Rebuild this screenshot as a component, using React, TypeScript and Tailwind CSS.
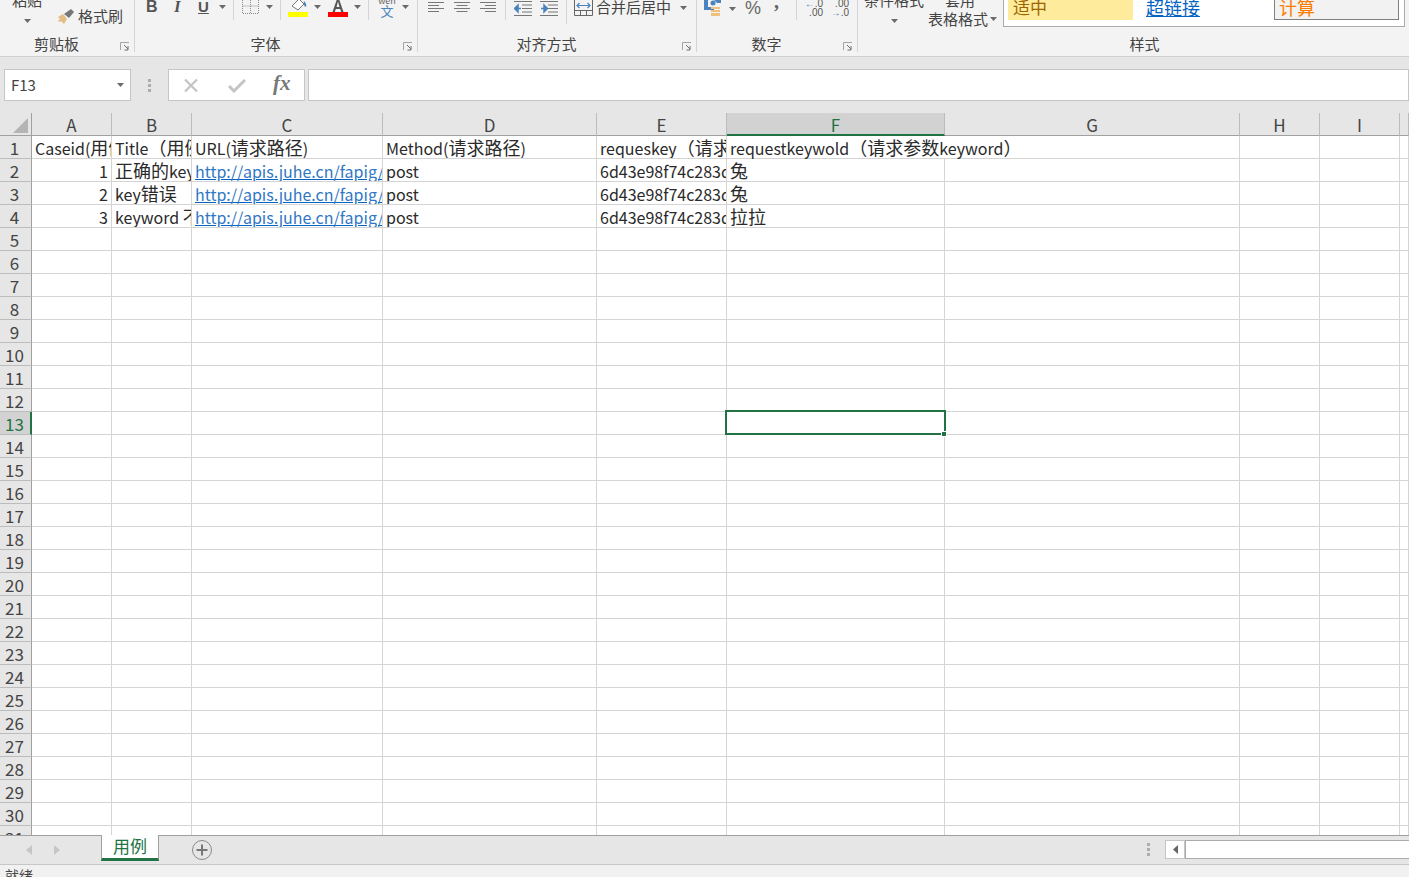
import type { ReactNode } from "react";

const COLS = ["A", "B", "C", "D", "E", "F", "G", "H", "I", ""];
const ROW_COUNT = 31;
const URL = "http://apis.juhe.cn/fapig/douyin/billboard";
const KEY = "6d43e98f74c283d4e6d1e2f4a7b";

const DATA: Record<number, string[]> = {
  1: ["Caseid(用例编号)", "Title（用例标题）", "URL(请求路径)", "Method(请求路径)", "requeskey（请求参数key）", "requestkeywold（请求参数keyword）"],
  2: ["1", "正确的key和keyword", URL, "post", KEY, "兔"],
  3: ["2", "key错误", URL, "post", KEY, "兔"],
  4: ["3", "keyword 不存在", URL, "post", KEY, "拉拉"],
};

// the sheet font draws Chinese a little larger than latin
function mixed(text: string) {
  return text.split(/([\u3000-\u9fff\uff00-\uffef]+)/).map((part, i) =>
    i % 2 === 1 ? (
      <span key={i} className="text-[18px] leading-none">
        {part}
      </span>
    ) : (
      part
    ),
  );
}

function Caret({ className = "" }: { className?: string }) {
  return (
    <svg width="7" height="4" viewBox="0 0 7 4" className={"shrink-0 " + className}>
      <path d="M0 0h7L3.5 4z" fill="#6a6a6a" />
    </svg>
  );
}

function Launcher() {
  return (
    <svg width="10" height="9" viewBox="0 0 10 9" className="absolute right-[5px] bottom-[1px]">
      <path d="M.5 8V.5H9" fill="none" stroke="#a5a5a5" />
      <path d="M4 3l4 4M8 4v4H4.500" fill="none" stroke="#6f6f6f" />
    </svg>
  );
}

function Sep() {
  return <div className="h-[20px] w-px shrink-0 bg-[#d4d4d4]" />;
}

function Group({ width, label, children }: { width: number; label: string; children: ReactNode }) {
  return (
    <div className="relative flex h-[52px] shrink-0 flex-col" style={{ width }}>
      <div className="absolute top-0 right-0 h-[52px] w-px bg-[#d4d4d4]" />
      <div className="h-[36px] overflow-hidden">{children}</div>
      <div className="pr-[22px] text-center text-[15px] leading-[16px] text-[#444]">{label}</div>
      <Launcher />
    </div>
  );
}

function AlignIcon({ mode }: { mode: "l" | "c" | "r" }) {
  const long = [1.5, 7.5];
  const short = [4.5, 10.5];
  const x = mode === "l" ? 0 : mode === "c" ? 2.5 : 5;
  return (
    <svg width="16" height="12" viewBox="0 0 16 12" className="shrink-0">
      {long.map((y) => <path key={y} d={`M0 ${y}h16`} stroke="#777" />)}
      {short.map((y) => <path key={y} d={`M${x} ${y}h11`} stroke="#777" />)}
    </svg>
  );
}

function IndentIcon({ flip }: { flip?: boolean }) {
  return (
    <svg width="18" height="15" viewBox="0 0 18 15" className="shrink-0">
      <path d="M0 .5h18M8 4h10M8 7.500h10M8 11h10M0 14.500h18" stroke="#777" />
      {flip ? (
        <path d="M1 7.500h4M4 4l3.500 3.500L4 11z" stroke="#4a83bd" strokeWidth="1.5" fill="#4a83bd" />
      ) : (
        <path d="M7 7.500H3M4 4L.5 7.500 4 11z" stroke="#4a83bd" strokeWidth="1.5" fill="#4a83bd" />
      )}
    </svg>
  );
}

function ClipboardGroup() {
  return (
    <Group width={135} label="剪贴板">
      <div className="flex">
        <div className="ml-[12px] flex w-[30px] flex-col items-center">
          <span className="-mt-[9px] text-[15px] leading-[18px] text-[#444]">粘贴</span>
          <Caret className="mt-[10px]" />
        </div>
        <div className="mt-[6px] ml-[15px] flex items-center gap-[4px]">
          <svg width="17" height="15" viewBox="0 0 17 15">
            <path d="M1 8l5-3 4 5-3 5-3-3-1 1-2-1 2-2z" fill="#e4bd84" />
            <path d="M7 5l7-5 3 3-5 6z" fill="#777" />
          </svg>
          <span className="text-[15px] leading-[20px] text-[#444]">格式刷</span>
        </div>
      </div>
    </Group>
  );
}

function FontGroup() {
  return (
    <Group width={283} label="字体">
      <div className="-mt-[2px] flex h-[22px] items-start">
        <span className="ml-[11px] w-[10px] font-['Liberation_Sans',sans-serif] text-[16px] leading-[18px] font-bold text-[#555]">B</span>
        <span className="ml-[18px] w-[8px] font-['Liberation_Serif',serif] text-[17px] leading-[18px] font-bold text-[#555] italic">I</span>
        <span className="ml-[16px] w-[11px] font-['Liberation_Sans',sans-serif] text-[15px] leading-[18px] font-bold text-[#555] underline">U</span>
        <Caret className="mt-[7px] ml-[10px]" />
        <div className="mt-[2px] ml-[7px]"><Sep /></div>
        <svg width="17" height="16" viewBox="0 0 17 16" className="ml-[8px]">
          <path d="M.5 0v15.500h16V0M8.500 0v15M.5 8h16" fill="none" stroke="#8a8a8a" strokeDasharray="1 1" />
        </svg>
        <Caret className="mt-[7px] ml-[7px]" />
        <div className="mt-[2px] ml-[7px]"><Sep /></div>
        <svg width="20" height="20" viewBox="0 0 20 20" className="ml-[7px] shrink-0">
          <path d="M4 8l7-7 5 5-6 6z" fill="#fff" stroke="#777" />
          <path d="M16 3q3 3 2 6-3-1-2-6z" fill="#4a83bd" />
          <rect y="14" width="20" height="5" fill="#ffff00" />
        </svg>
        <Caret className="mt-[7px] ml-[6px]" />
        <svg width="20" height="20" viewBox="0 0 20 20" className="ml-[7px] shrink-0">
          <path d="M4.500 14L9 1h2l4.500 13h-2.300l-1-3H7.800l-1 3zM8.500 9h3L10 3.500z" fill="#555" />
          <rect y="14" width="20" height="5" fill="#ff0000" />
        </svg>
        <Caret className="mt-[7px] ml-[6px]" />
        <div className="mt-[2px] ml-[7px]"><Sep /></div>
        <div className="ml-[9px] flex w-[18px] flex-col items-center">
          <span className="-mt-[1px] text-[9px] leading-[7px] text-[#666]">wén</span>
          <span className="text-[13px] leading-[13px] text-[#4a83bd]">文</span>
        </div>
        <Caret className="mt-[7px] ml-[6px]" />
      </div>
    </Group>
  );
}

function AlignGroup() {
  return (
    <Group width={279} label="对齐方式">
      <div className="flex h-[24px] items-start">
        <div className="mt-[1px] ml-[10px] flex gap-[10px]">
          <AlignIcon mode="l" />
          <AlignIcon mode="c" />
          <AlignIcon mode="r" />
        </div>
        <div className="ml-[9px]"><Sep /></div>
        <div className="mt-[1px] ml-[8px] flex gap-[8px]">
          <IndentIcon />
          <IndentIcon flip />
        </div>
        <div className="ml-[8px]"><div className="h-[24px] w-px bg-[#d4d4d4]" /></div>
        <svg width="19" height="16" viewBox="0 0 19 16" className="ml-[7px]">
          <path d="M.5 0v15.500h18V0M.5 10.500h18M6.500 10.500v5M12.500 10.500v5" fill="none" stroke="#666" />
          <path d="M3 5.500h13M5.500 3L3 5.500 5.500 8M13.500 3L16 5.500 13.500 8" fill="none" stroke="#4a83bd" strokeWidth="1.200" />
        </svg>
        <span className="-mt-[3px] ml-[3px] text-[15px] leading-[20px] whitespace-nowrap text-[#444]">合并后居中</span>
        <Caret className="mt-[6px] ml-[9px]" />
      </div>
    </Group>
  );
}

function NumberGroup() {
  return (
    <Group width={161} label="数字">
      <div className="flex h-[24px] items-start">
        <svg width="19" height="17" viewBox="0 0 19 17" className="ml-[7px] shrink-0">
          <path d="M0 0h4v7h6v3H0z" fill="#4a83bd" />
          <path d="M10 0h7v3h-4z" fill="#4a83bd" />
          <circle cx="9" cy="3" r="2.500" fill="#4a83bd" />
          <path d="M7 7h9v2H7zM7 10h9v2H7zM7 13h9v3H7z" fill="#eec27e" />
        </svg>
        <Caret className="mt-[7px] ml-[6px]" />
        <span className="-mt-[1px] ml-[9px] font-['Liberation_Sans',sans-serif] text-[18px] leading-[18px] text-[#666]">%</span>
        <span className="-mt-[8px] ml-[13px] font-['Liberation_Serif',serif] text-[20px] leading-[18px] font-bold text-[#666]">,</span>
        <div className="ml-[17px]"><Sep /></div>
        <div className="ml-[9px] flex w-[17px] flex-col items-end font-['Liberation_Sans',sans-serif] text-[10px] leading-[9px] text-[#555]">
          <span className="-mt-[1px]"><b className="text-[#4a83bd]">←</b>.0</span>
          <span>.00</span>
        </div>
        <div className="ml-[9px] flex w-[17px] flex-col items-end font-['Liberation_Sans',sans-serif] text-[10px] leading-[9px] text-[#555]">
          <span className="-mt-[1px]">.00</span>
          <span><b className="text-[#4a83bd]">→</b>.0</span>
        </div>
      </div>
    </Group>
  );
}

function StylesGroup() {
  return (
    <div className="flex h-[52px] flex-1 flex-col">
      <div className="flex h-[36px] overflow-hidden text-[#444]">
        <div className="ml-[6px] flex w-[60px] flex-col items-center">
          <span className="-mt-[9px] text-[15px] leading-[18px] whitespace-nowrap">条件格式</span>
          <Caret className="mt-[10px]" />
        </div>
        <div className="ml-[4px] flex w-[71px] flex-col">
          <span className="-mt-[9px] pl-[17px] text-[15px] leading-[18px]">套用</span>
          <div className="flex items-center whitespace-nowrap">
            <span className="text-[15px] leading-[20px]">表格格式</span>
            <Caret className="ml-[2px]" />
          </div>
        </div>
        <div className="ml-[4px] box-border flex h-[27px] w-[402px] shrink-0 border-r border-b border-l border-[#ababab] bg-white pl-[4px]">
          <div className="h-[20px] w-[125px] bg-[#ffeb9c] pl-[5px] text-[17px] leading-[14px] text-[#9c6500]">适中</div>
          <div className="ml-[13px] w-[128px] text-[18px] leading-[15px] text-[#0563c1] underline">超链接</div>
          <div className="box-border h-[20px] w-[125px] border-r border-b border-l border-[#7f7f7f] bg-[#f2f2f2] pl-[4px] text-[18px] leading-[15px] text-[#fa7d00]">计算</div>
        </div>
      </div>
      <div className="pl-[22px] text-center text-[15px] leading-[16px] text-[#444]">样式</div>
    </div>
  );
}

function Ribbon() {
  return (
    <div className="flex h-[57px] shrink-0 border-b border-[#d0d0d0] bg-[#f3f3f3]">
      <ClipboardGroup />
      <FontGroup />
      <AlignGroup />
      <NumberGroup />
      <StylesGroup />
    </div>
  );
}

function FormulaBar() {
  return (
    <div className="flex h-[56px] shrink-0 bg-[#e6e6e6] pt-[12px] pl-[4px]">
      <div className="flex h-[32px] w-[127px] items-center justify-between border border-[#c6c6c6] bg-white pr-[6px] pl-[6px] text-[15px] text-[#444]">
        F13
        <Caret />
      </div>
      <div className="mx-[16px] flex h-[32px] w-[5px] flex-col items-center justify-center gap-[2px]">
        <i className="size-[3px] bg-[#adadad]" />
        <i className="size-[3px] bg-[#adadad]" />
        <i className="size-[3px] bg-[#adadad]" />
      </div>
      <div className="flex h-[32px] w-[137px] items-center border border-[#c6c6c6] bg-white pl-[14px]">
        <svg width="16" height="15" viewBox="0 0 16 15">
          <path d="M2 1.500l12 12M14 1.500l-12 12" stroke="#c4c4c4" strokeWidth="2.200" />
        </svg>
        <svg width="18" height="15" viewBox="0 0 18 15" className="ml-[29px]">
          <path d="M1 8l5 5L17 2" fill="none" stroke="#c4c4c4" strokeWidth="3" />
        </svg>
        <span className="mt-[-2px] ml-[27px] font-['Liberation_Serif',serif] text-[21px] font-bold text-[#777] italic">fx</span>
      </div>
      <div className="ml-[3px] h-[32px] flex-1 border border-[#c6c6c6] bg-white" />
    </div>
  );
}

function Cell({ row, col, text }: { row: number; col: number; text?: string }) {
  const spills = row === 1 && col === 5;
  const isNum = col === 0 && row > 1;
  const isLink = col === 2 && row > 1;
  const isActive = row === 13 && col === 5;
  return (
    <div
      className={
        "relative h-[23px] border-b border-[#d4d4d4] whitespace-nowrap " +
        (spills ? "z-10 " : "border-r ") +
        (spills || isActive ? "overflow-visible " : "overflow-hidden ")
      }
    >
      {text && (
        <div
          className={
            "px-[3px] text-[16px] leading-[25px] " +
            (isNum ? "text-right " : "text-left ") +
            (isLink ? "text-[#2f77c5] underline decoration-[#0563c1] " : "text-[#2a2a2a] ")
          }
        >
          {mixed(text)}
        </div>
      )}
      {isActive && (
        <div className="absolute -top-[2px] -left-[2px] z-20 h-[25px] w-[221px] border-2 border-[#217346]">
          <div className="absolute -right-[3px] -bottom-[4px] size-[6px] border border-white bg-[#217346]" />
        </div>
      )}
    </div>
  );
}

function Sheet() {
  const rows = Array.from({ length: ROW_COUNT }, (_, i) => i + 1);
  return (
    <div className="min-h-0 flex-1 overflow-hidden bg-white">
      <div className="grid grid-cols-[32px_80px_80px_191px_214px_130px_218px_295px_80px_80px_1fr] text-[#444]">
        <div className="flex h-[23px] items-end justify-end border-r border-b border-[#a0a0a0] bg-[#e6e6e6] pr-[3px] pb-[2px]">
          <svg width="15" height="15" viewBox="0 0 15 15">
            <path d="M15 0v15H0z" fill="#b4b4b4" />
          </svg>
        </div>
        {COLS.map((c, i) => (
          <div
            key={i}
            className={
              "h-[23px] border-r border-b border-r-[#bcbcbc] text-center text-[17px] leading-[23px] " +
              (c === "F"
                ? "border-b-2 border-b-[#217346] bg-[#d2d2d2] text-[#217346]"
                : "border-b-[#a0a0a0] bg-[#e6e6e6]")
            }
          >
            {c}
          </div>
        ))}
        {rows.map((r) => (
          <div key={r} className="contents">
            <div
              className={
                "h-[23px] border-b text-center text-[17px] leading-[23px] " +
                (r === 13
                  ? "border-r-2 border-b-[#bcbcbc] border-r-[#217346] bg-[#d2d2d2] pr-[1px] text-[#217346]"
                  : "border-r border-b-[#bcbcbc] border-r-[#a0a0a0] bg-[#e6e6e6] pr-[2px]")
              }
            >
              {r}
            </div>
            {COLS.map((_, c) => (
              <Cell key={c} row={r} col={c} text={DATA[r]?.[c]} />
            ))}
          </div>
        ))}
      </div>
    </div>
  );
}

function TabBar() {
  return (
    <div className="flex h-[30px] shrink-0 border-t border-b border-t-[#a0a0a0] border-b-[#c6c6c6] bg-[#e6e6e6]">
      <div className="flex w-[101px] items-center pl-[26px]">
        <svg width="6" height="10" viewBox="0 0 6 10"><path d="M6 0v10L0 5z" fill="#c6c6c6" /></svg>
        <svg width="6" height="10" viewBox="0 0 6 10" className="ml-[22px]"><path d="M0 0v10l6-5z" fill="#c6c6c6" /></svg>
      </div>
      <div className="-mt-px box-border h-[26px] w-[58px] border-x border-b-[3px] border-x-[#a0a0a0] border-b-[#217346] bg-white text-center text-[17px] leading-[21px] text-[#217346]">
        用例
      </div>
      <svg width="22" height="22" viewBox="0 0 22 22" className="mt-[3px] ml-[32px]">
        <circle cx="11" cy="11" r="9.500" fill="none" stroke="#8a8a8a" />
        <path d="M5.500 11h11M11 5.500v11" stroke="#777" strokeWidth="2" />
      </svg>
      <div className="ml-auto flex w-[263px] items-center pb-[1px]">
        <div className="flex w-[5px] flex-col items-center gap-[2px]">
          <i className="size-[3px] bg-[#adadad]" />
          <i className="size-[3px] bg-[#adadad]" />
          <i className="size-[3px] bg-[#adadad]" />
        </div>
        <div className="ml-[14px] flex h-[19px] w-[20px] items-center justify-center border border-[#c6c6c6] bg-white">
          <svg width="5" height="9" viewBox="0 0 5 9"><path d="M5 0v9L0 4.500z" fill="#666" /></svg>
        </div>
        <div className="h-[19px] flex-1 border-t border-b border-l border-[#ababab] bg-white" />
      </div>
    </div>
  );
}

export default function App() {
  return (
    <div className="flex h-[877px] w-[1409px] flex-col overflow-hidden bg-white font-['Noto_Sans_CJK_SC',sans-serif]">
      <Ribbon />
      <FormulaBar />
      <Sheet />
      <TabBar />
      <div className="h-[12px] shrink-0 overflow-hidden bg-[#f1f1f1] pl-[5px] text-[14px] leading-[20px] text-[#444]">就绪</div>
    </div>
  );
}
